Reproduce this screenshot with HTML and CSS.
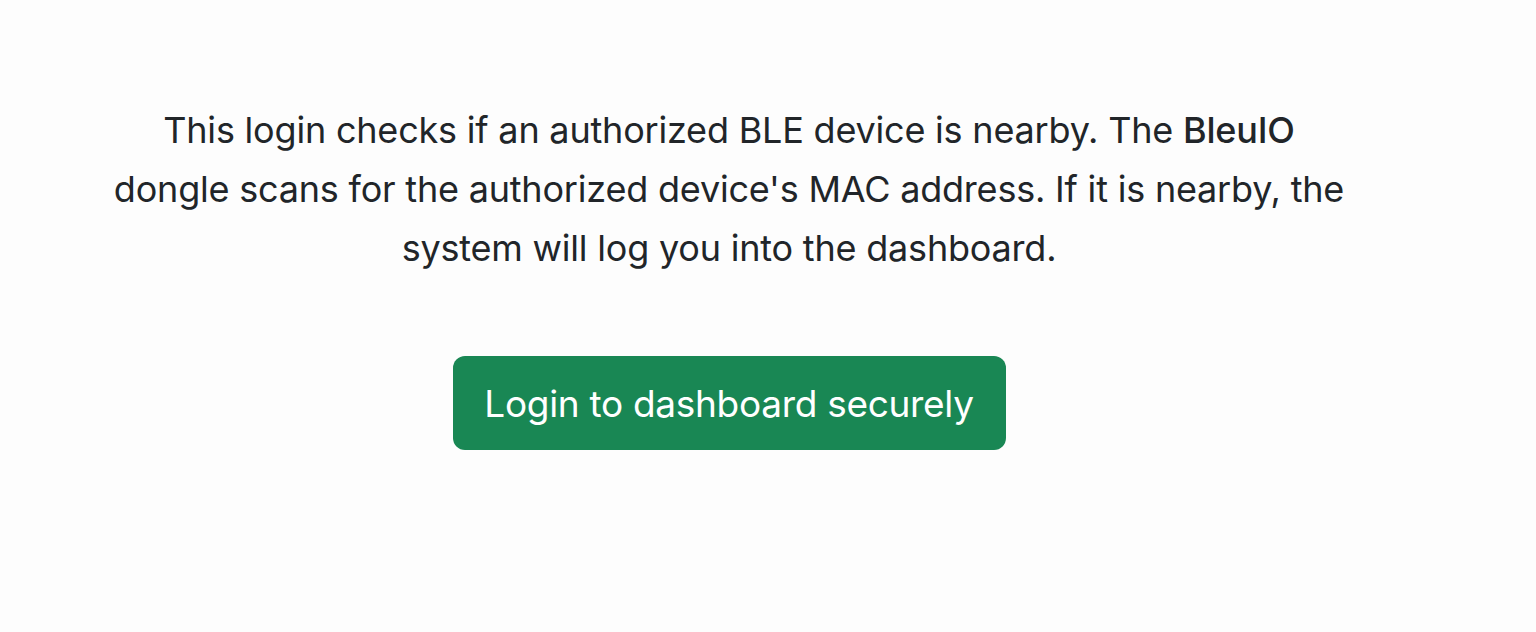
FILE: index.html
```html
<!DOCTYPE html>
<html lang="en">
<head>
<meta charset="utf-8">
<title>BleuIO Login</title>
<link rel="stylesheet" href="styles.css">
</head>
<body>
<main class="page">
  <section class="column">
    <p class="intro">This login checks if an authorized BLE device is nearby. The <strong>BleuIO</strong> dongle scans for the authorized device's MAC address. If it is nearby, the system will log you into the dashboard.</p>
    <button class="btn-login" type="button">Login to dashboard securely</button>
  </section>
</main>
</body>
</html>
```
FILE: styles.css
```css
html, body {
  margin: 0;
  padding: 0;
  background: #fdfdfd;
}
body {
  font-family: Inter, "Noto Sans", "Liberation Sans", sans-serif;
  color: #212529;
}
.page {
  padding-top: 101px;
  padding-left: 104px;
}
.column {
  width: 1250px;
  display: flex;
  flex-direction: column;
  align-items: center;
}
.intro {
  margin: 0;
  width: 1240px;
  text-align: center;
  font-size: 36px;
  line-height: 59px;
  font-weight: 400;
  letter-spacing: -0.2px;
}
.intro strong {
  font-weight: 500;
}
.btn-login {
  margin-top: 78px;
  width: 553px;
  height: 94px;
  border: none;
  border-radius: 12px;
  background: #198754;
  color: #ffffff;
  font-family: inherit;
  font-size: 37px;
  letter-spacing: -0.3px;
  cursor: pointer;
}
```
